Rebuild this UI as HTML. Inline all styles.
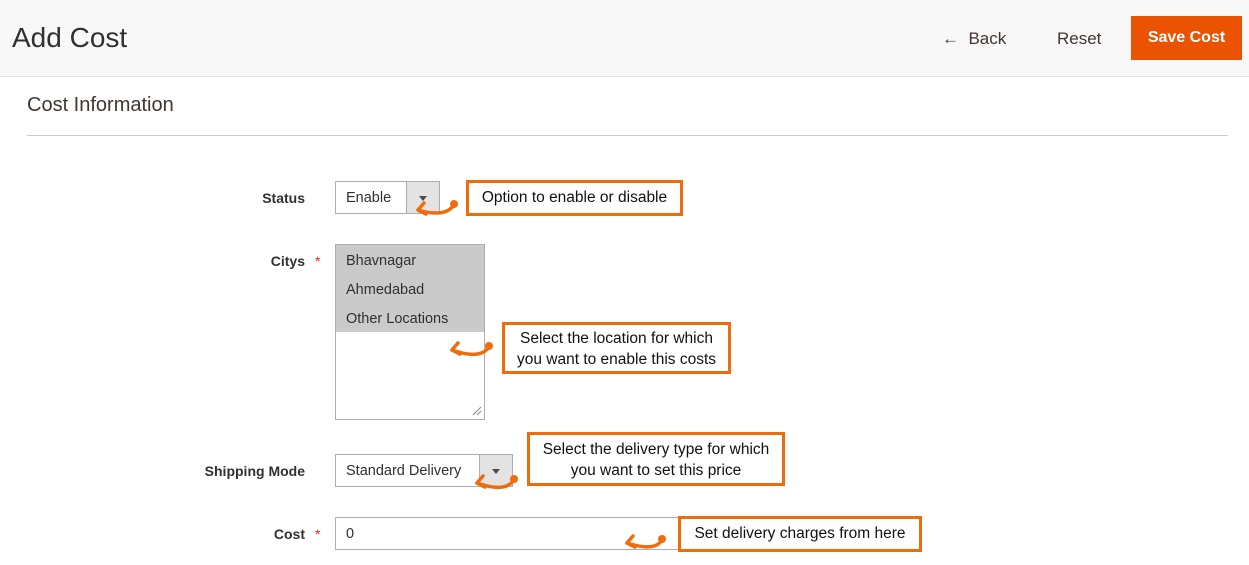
<!DOCTYPE html>
<html><head><style>
body{margin:0;width:1249px;height:565px;background:#fff;font-family:"Liberation Sans",sans-serif;color:#303030;position:relative;overflow:hidden}
.a{position:absolute}
.hdr{left:0;top:0;width:1249px;height:76px;background:#f8f8f8;border-bottom:1px solid #e3e3e3}
.lbl{font-size:14px;font-weight:bold;color:#303030;text-align:right;width:120px}
.star{color:#e22626;font-size:14px}
.inp{border:1px solid #adadad;background:#fff;box-sizing:border-box;font-size:14.5px;color:#303030}
.dd{position:absolute;top:0;bottom:0;right:0;width:32px;background:#e3e3e3;border-left:1px solid #adadad}
.dd:after{content:"";position:absolute;left:12px;top:14px;border:4px solid transparent;border-top:5px solid #514943}
.note{border:3px solid #ef6c0a;background:#fff;font-size:15.5px;color:#111;text-align:center;box-sizing:border-box;line-height:21px;white-space:nowrap}
</style></head><body>
<div class="a hdr"></div>
<div class="a" style="left:12px;top:22px;font-size:28px;color:#303030">Add Cost</div>
<div class="a" style="left:942px;top:29px;font-size:17px;color:#41362f">&#8592;&nbsp; Back</div>
<div class="a" style="left:1057px;top:29px;font-size:17px;color:#41362f">Reset</div>
<div class="a" style="left:1131px;top:16px;width:111px;height:44px;background:#eb5202;color:#fff;font-size:16px;font-weight:bold;line-height:44px;text-align:center">Save Cost</div>
<div class="a" style="left:27px;top:94px;font-size:20px;color:#41362f">Cost Information</div>
<div class="a" style="left:27px;top:135px;width:1201px;height:1px;background:#ccc"></div>

<div class="a lbl" style="left:185px;top:190px">Status</div>
<div class="a inp" style="left:335px;top:181px;width:105px;height:33px;padding:8px 10px">Enable<div class="dd"></div></div>

<div class="a lbl" style="left:185px;top:253px">Citys</div><div class="a star" style="left:315px;top:253px">*</div>
<div class="a inp" style="left:335px;top:244px;width:150px;height:176px">
<div style="background:#cacaca;height:87px;padding:2px 10px 0;line-height:29px;box-sizing:border-box">Bhavnagar<br>Ahmedabad<br>Other Locations</div></div>

<div class="a lbl" style="left:185px;top:463px">Shipping Mode</div>
<div class="a inp" style="left:335px;top:454px;width:178px;height:33px;padding:8px 10px">Standard Delivery<div class="dd"></div></div>

<div class="a lbl" style="left:185px;top:526px">Cost</div><div class="a star" style="left:315px;top:526px">*</div>
<div class="a inp" style="left:335px;top:517px;width:345px;height:33px;padding:8px 10px">0</div>

<div class="a note" style="left:466px;top:180px;width:217px;height:36px;line-height:30px">Option to enable or disable</div>
<div class="a note" style="left:502px;top:322px;width:229px;height:52px;padding-top:3px">Select the location for which<br>you want to enable this costs</div>
<div class="a note" style="left:527px;top:432px;width:258px;height:54px;padding-top:4px">Select the delivery type for which<br>you want to set this price</div>
<div class="a note" style="left:678px;top:516px;width:244px;height:36px;line-height:30px">Set delivery charges from here</div>

<svg class="a" style="left:0;top:0" width="1249" height="565">
<g fill="none" stroke="#ef6c0a" stroke-width="3.5" stroke-linecap="round">
<path d="M454 205 Q445 218 418 210"/><path d="M418 210 L424 203 M418 210 L426 214"/>
<path d="M489 347 Q480 360 452 350"/><path d="M452 350 L458 343 M452 350 L460 354"/>
<path d="M514 480 Q505 493 477 483"/><path d="M477 483 L483 476 M477 483 L485 487"/>
<path d="M662 540 Q655 552 627 543"/><path d="M627 543 L633 536 M627 543 L635 547"/>
</g>
<g fill="#ef6c0a"><circle cx="454" cy="204" r="4"/><circle cx="489" cy="346" r="4"/><circle cx="514" cy="479" r="4"/><circle cx="662" cy="539" r="4"/></g>
<path d="M481 407 L473 415 M481 411 L477 415" stroke="#888" stroke-width="1"/>
</svg>
</body></html>
